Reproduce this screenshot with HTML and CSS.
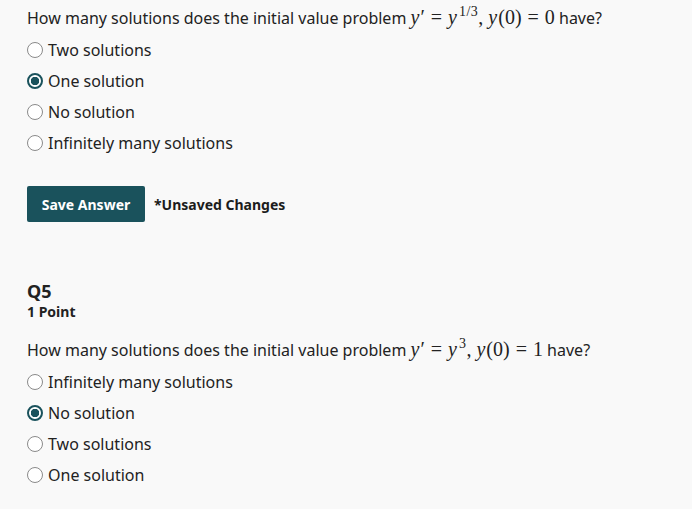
FILE: index.html
```html
<!DOCTYPE html>
<html lang="en">
<head>
  <meta charset="UTF-8" />
  <title>Quiz</title>
  <link rel="stylesheet" href="styles.css">
</head>
<body>

  <!-- Q4 (tail) -->
  <div class="question">
    <p class="prompt">How many solutions does the initial value problem
      <span class="math"><i>y</i>&prime;<span class="op">=</span><i>y</i><sup>1/3</sup>, <i>y</i>(0)<span class="op">=</span>0</span> have?</p>
    <ul class="options">
      <li><span class="radio"></span>Two solutions</li>
      <li><span class="radio checked"></span>One solution</li>
      <li><span class="radio"></span>No solution</li>
      <li><span class="radio"></span>Infinitely many solutions</li>
    </ul>
    <div class="save-row">
      <button class="save-btn">Save Answer</button>
      <span class="unsaved">*Unsaved Changes</span>
    </div>
  </div>

  <!-- Q5 -->
  <div class="question">
    <h2 class="q-title">Q5</h2>
    <div class="q-points">1 Point</div>
    <p class="prompt">How many solutions does the initial value problem
      <span class="math"><i>y</i>&prime;<span class="op">=</span><i>y</i><sup>3</sup>, <i>y</i>(0)<span class="op">=</span>1</span> have?</p>
    <ul class="options">
      <li><span class="radio"></span>Infinitely many solutions</li>
      <li><span class="radio checked"></span>No solution</li>
      <li><span class="radio"></span>Two solutions</li>
      <li><span class="radio"></span>One solution</li>
    </ul>
  </div>

</body>
</html>
```

FILE: styles.css
```css
* { box-sizing: border-box; margin: 0; padding: 0; }
body { background: #f9f9f9; color: #222; font-family: "Noto Sans", sans-serif; font-size: 16px; padding: 6px 27px 0; }

/* ===== Question ===== */
.prompt { line-height: 24px; height: 24px; white-space: nowrap; }
.math { font-family: "Liberation Serif", serif; font-size: 20px; line-height: 20px; }
.math i { margin-right: 1px; }
.math sup { font-size: 14px; vertical-align: 8px; line-height: 0; margin-left: 1px; letter-spacing: 0.5px; }
.math .op { margin: 0 6px; }

.options { list-style: none; margin-top: 4px; }
.options li { display: flex; align-items: center; gap: 5px; height: 31px; }

.radio { width: 16px; height: 16px; border-radius: 50%; border: 1px solid #8a8a8a; background: #fff; flex-shrink: 0; }
.radio.checked { border: 2px solid #1a525c; background: radial-gradient(circle, #1a525c 0 4px, #fff 4.5px); }

/* ===== Save ===== */
.save-row { display: flex; align-items: center; gap: 9px; margin-top: 28px; }
.save-btn { background: #1a525c; color: #fff; border: none; border-radius: 2px; width: 118px; height: 36px; font-family: "Noto Sans", sans-serif; font-size: 14px; font-weight: bold; }
.unsaved { font-size: 14px; font-weight: bold; color: #1c1c1c; }

/* ===== Q5 header ===== */
.q-title { font-size: 18px; font-weight: bold; line-height: 24px; margin-top: 57px; }
.q-points { font-size: 14px; font-weight: bold; line-height: 18px; margin-bottom: 17px; }
```
